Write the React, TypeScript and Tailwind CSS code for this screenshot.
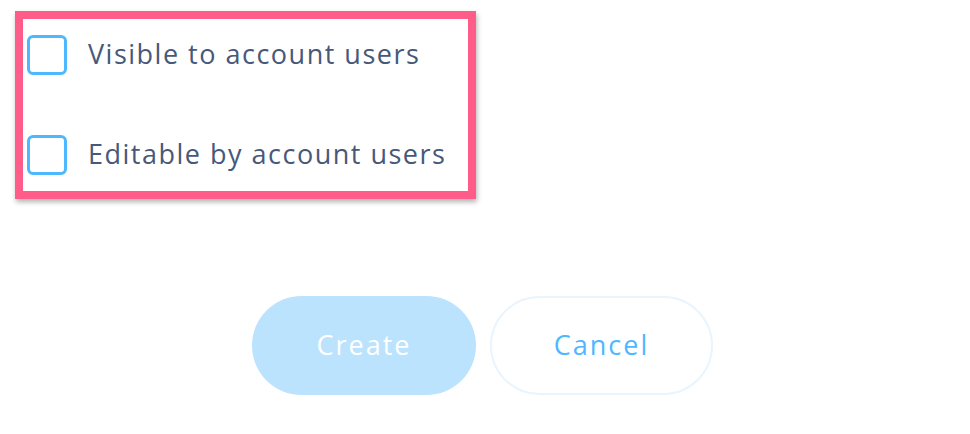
import React from "react";

function Check({ label }: { label: string }) {
  return (
    <div className="flex items-center h-[40px]">
      <div className="w-[40px] h-[40px] rounded-[6px] border-[3px] border-[#4db8ff] bg-white shrink-0" />
      <span className="ml-[21px] pb-[3px] text-[27px] tracking-[1.5px] text-[#46597a] leading-none">{label}</span>
    </div>
  );
}

export default function App() {
  return (
    <div className="w-[970px] h-[434px] bg-white" style={{ fontFamily: '"Open Sans", sans-serif' }}>
      <div className="pt-[11px] pl-[15px]">
        <div className="w-[461px] h-[188px] border-[8px] border-[#ff5c8a] shadow-[1px_3px_5px_rgba(0,0,0,0.3)] pt-[16px] pl-[4px] flex flex-col gap-[60px]">
          <Check label="Visible to account users" />
          <Check label="Editable by account users" />
        </div>
      </div>
      <div className="mt-[97px] pl-[252px] flex gap-[14px]">
        <button className="w-[224px] h-[99px] rounded-full bg-[#bbe3fd] text-white text-[27px] font-medium tracking-[2px]">Create</button>
        <button className="w-[223px] h-[99px] rounded-full border-2 border-[#e8f4fe] bg-white text-[#4db8ff] text-[27px] font-medium tracking-[2px]">Cancel</button>
      </div>
    </div>
  );
}
